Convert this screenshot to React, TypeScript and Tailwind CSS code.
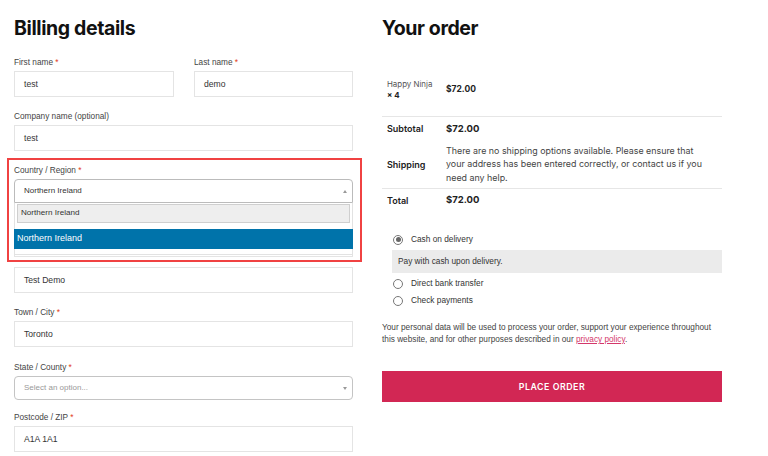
import React from "react";

const sans = { fontFamily: '"Liberation Sans", Arial, sans-serif' };
const inter = { fontFamily: 'Inter, "Noto Sans", sans-serif' };

function Label({ children, req }: { children: React.ReactNode; req?: boolean }) {
  return (
    <div className="h-[12px] leading-[12px] mb-[2px] text-[8.25px] text-[#444]">
      {children}
      {req && (
        <>
          {" "}
          <span className="text-[#e2401c]">*</span>
        </>
      )}
    </div>
  );
}

function Input({ value }: { value: string }) {
  return (
    <div className="h-[26px] border border-[#e4e4e4] bg-white flex items-center pl-[9px] text-[8.6px] text-[#333]">
      {value}
    </div>
  );
}

function Radio({ checked, label }: { checked?: boolean; label: string }) {
  return (
    <div className="h-[17px] flex items-center pl-[11px]">
      <div className="w-[10px] h-[10px] rounded-full border border-[#777] bg-white flex items-center justify-center shrink-0">
        {checked && <div className="w-[5px] h-[5px] rounded-full bg-[#666]" />}
      </div>
      <span className="ml-[8px] text-[8.3px] text-[#333]">{label}</span>
    </div>
  );
}

export default function App() {
  return (
    <div className="w-[768px] h-[456px] bg-white overflow-hidden flex gap-[29px] px-[14px]">
      {/* Left column */}
      <div className="w-[339px] shrink-0" style={sans}>
        <h1
          className="pt-[16px] h-[40px] leading-[24px] text-[19.5px] font-bold text-[#111] tracking-[-0.02em]"
          style={inter}
        >
          Billing details
        </h1>

        <div className="mt-[17px] grid grid-cols-[160px_159px] gap-x-[20px]">
          <div>
            <Label req>First name</Label>
            <Input value="test" />
          </div>
          <div>
            <Label req>Last name</Label>
            <Input value="demo" />
          </div>
        </div>

        <div className="mt-[14px]">
          <Label>Company name (optional)</Label>
          <Input value="test" />
        </div>

        {/* Country with open dropdown */}
        <div className="mt-[14px] relative">
          <Label req>Country / Region</Label>
          <div className="h-[24px] border border-[#bbb] rounded-t-[4px] bg-white flex items-center pl-[9px] pr-[4px] text-[8px] text-[#333]">
            <span className="flex-1">Northern Ireland</span>
            <span className="w-0 h-0 border-x-[2.5px] border-x-transparent border-b-[3px] border-b-[#999] mr-[1px]" />
          </div>

          {/* Street address (hidden behind dropdown) */}
          <div className="mt-[14px]">
            <Label req>Street address</Label>
            <div className="h-[26px] border border-[#e4e4e4] bg-white" />
          </div>

          {/* Dropdown */}
          <div className="absolute left-0 top-[38px] w-[339px] h-[52px] bg-white border border-[#e2e2e2] border-t-0 z-10">
            <div className="mx-[2px] mt-[1px] h-[19px] bg-[#eeeeee] border border-[#cfcfcf] flex items-center pl-[3px] text-[8.1px] text-[#333]">
              Northern Ireland
            </div>
            <div className="mt-[6px] -mx-px h-[20px] bg-[#0073aa] flex items-center pl-[3px] text-[9px] text-white">
              Northern Ireland
            </div>
          </div>

          {/* annotation */}
          <div className="absolute -left-[7px] -top-[7px] w-[355px] h-[104px] border-2 border-[#f04242] z-20 pointer-events-none" />
        </div>

        <div className="mt-[10px]">
          <Input value="Test Demo" />
        </div>

        <div className="mt-[14px]">
          <Label req>Town / City</Label>
          <Input value="Toronto" />
        </div>

        <div className="mt-[15px]">
          <Label req>State / County</Label>
          <div className="h-[24px] border border-[#c4c4c4] rounded-[4px] bg-white flex items-center pl-[9px] pr-[4px] text-[8px] text-[#999]">
            <span className="flex-1">Select an option...</span>
            <span className="w-0 h-0 border-x-[2.5px] border-x-transparent border-t-[3px] border-t-[#999] mr-[1px]" />
          </div>
        </div>

        <div className="mt-[12px]">
          <Label req>Postcode / ZIP</Label>
          <Input value="A1A 1A1" />
        </div>
      </div>

      {/* Right column */}
      <div className="w-[340px] shrink-0">
        <h1
          className="pt-[16px] h-[40px] leading-[24px] text-[19.5px] font-bold text-[#111] tracking-[-0.02em]"
          style={inter}
        >
          Your order
        </h1>

        <div className="mt-[23px]" style={inter}>
          <div className="h-[54px] border-b border-[#e6e6e6] flex items-center">
            <div className="w-[64px] pl-[5px] text-[7.9px] leading-[10.3px]">
              <div className="text-[#555]">Happy Ninja</div>
              <div className="font-bold text-[#222]">× 4</div>
            </div>
            <div className="text-[8.5px] font-bold text-[#222]">$72.00</div>
          </div>
          <div className="h-[24px] flex items-center">
            <div className="w-[64px] pl-[5px] text-[9px] font-semibold text-[#222]">Subtotal</div>
            <div className="text-[9.5px] font-bold text-[#222]">$72.00</div>
          </div>
          <div className="h-[48px] border-b border-[#e6e6e6] flex items-center">
            <div className="w-[64px] pl-[5px] text-[9px] font-semibold text-[#222]">Shipping</div>
            <div className="text-[8.9px] leading-[13.3px] text-[#444] pb-[1px]">
              There are no shipping options available. Please ensure that
              <br />
              your address has been entered correctly, or contact us if you
              <br />
              need any help.
            </div>
          </div>
          <div className="h-[23px] flex items-center">
            <div className="w-[64px] pl-[5px] text-[9px] font-semibold text-[#222]">Total</div>
            <div className="text-[9.5px] font-bold text-[#222]">$72.00</div>
          </div>
        </div>

        <div className="mt-[19px]" style={sans}>
          <Radio checked label="Cash on delivery" />
          <div className="mt-[2px] ml-[10px] h-[23px] bg-[#ebebeb] flex items-center pl-[6px] text-[8.3px] text-[#333]">
            Pay with cash upon delivery.
          </div>
          <div className="mt-[2px]">
            <Radio label="Direct bank transfer" />
            <Radio label="Check payments" />
          </div>

          <p className="mt-[13px] text-[8.25px] leading-[12px] text-[#444]">
            Your personal data will be used to process your order, support your experience throughout
            <br />
            this website, and for other purposes described in our{" "}
            <span className="text-[#d4376a] underline">privacy policy</span>.
          </p>
        </div>

        <button
          className="mt-[25px] w-[340px] h-[31px] bg-[#d22754] text-white text-[8.8px] font-semibold tracking-[0.06em] flex items-center justify-center"
          style={inter}
        >
          PLACE ORDER
        </button>
      </div>
    </div>
  );
}
